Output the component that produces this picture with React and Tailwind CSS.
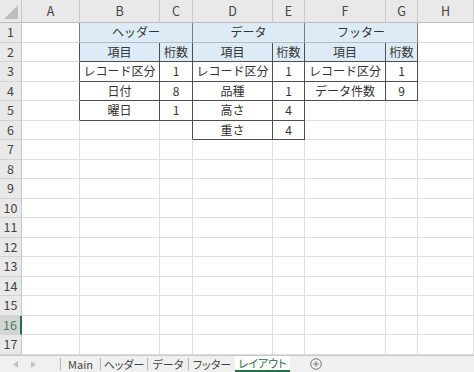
import React from "react";

const COLS = ["A", "B", "C", "D", "E", "F", "G", "H"];
const ROWS = Array.from({ length: 17 }, (_, i) => i + 1);

// cell data keyed by "row-col" (col is 1 = A)
const DATA = {
  "1-2": { text: "ヘッダー", span: 2, blue: true },
  "1-4": { text: "データ", span: 2, blue: true },
  "1-6": { text: "フッター", span: 2, blue: true },
  "2-2": { text: "項目", blue: true },
  "2-3": { text: "桁数", blue: true },
  "2-4": { text: "項目", blue: true },
  "2-5": { text: "桁数", blue: true },
  "2-6": { text: "項目", blue: true },
  "2-7": { text: "桁数", blue: true },
  "3-2": { text: "レコード区分" },
  "3-3": { text: "1" },
  "3-4": { text: "レコード区分" },
  "3-5": { text: "1" },
  "3-6": { text: "レコード区分" },
  "3-7": { text: "1" },
  "4-2": { text: "日付" },
  "4-3": { text: "8" },
  "4-4": { text: "品種" },
  "4-5": { text: "1" },
  "4-6": { text: "データ件数" },
  "4-7": { text: "9" },
  "5-2": { text: "曜日" },
  "5-3": { text: "1" },
  "5-4": { text: "高さ" },
  "5-5": { text: "4" },
  "6-4": { text: "重さ" },
  "6-5": { text: "4" },
};

const SKIP = ["1-3", "1-5", "1-7"];

const inTable = (r, c) => {
  if (c === 2 || c === 3) return r >= 1 && r <= 5;
  if (c === 4 || c === 5) return r >= 1 && r <= 6;
  if (c === 6 || c === 7) return r >= 1 && r <= 4;
  return false;
};

const TABS = [
  { label: "Main", w: "w-[40px]" },
  { label: "ヘッダー", w: "w-[47px]" },
  { label: "データ", w: "w-[41px]" },
  { label: "フッター", w: "w-[47px]" },
];

const Corner = () => (
  <div className="bg-[#e9e9e9] border-r border-b border-r-[#c6c6c6] border-b-[#bdbdbd] flex items-end justify-end p-[3px]">
    <svg width="14" height="14" viewBox="0 0 14 14">
      <polygon points="14,0 14,14 0,14" fill="#bfbfbf" />
    </svg>
  </div>
);

const Cell = ({ r, c }) => {
  const key = `${r}-${c}`;
  const d = DATA[key] || {};
  const last = c + (d.span || 1) - 1;
  const rightDark = inTable(r, last) || inTable(r, last + 1);
  const bottomDark = inTable(r, c) || inTable(r + 1, c);
  let bottom = bottomDark ? "border-b-[#4f4f4f]" : "border-b-[#dedede]";
  if (r === 1 && inTable(r, c)) bottom = "border-b-[#aebfd0]";
  const right = rightDark
    ? r === 1
      ? "border-r-[#7d7d7d]"
      : "border-r-[#4f4f4f]"
    : "border-r-[#dedede]";
  return (
    <div
      className={`${d.span === 2 ? "col-span-2" : ""} ${
        d.blue ? "bg-[#ddebf7]" : "bg-white"
      } border-r border-b ${right} ${bottom} flex items-center justify-center text-[12px] text-[#333] leading-none whitespace-nowrap overflow-hidden`}
    >
      {d.text}
    </div>
  );
};

export default function App() {
  return (
    <div className="w-[474px] h-[372px] bg-white overflow-hidden font-['Noto_Sans_CJK_JP','Noto_Sans',sans-serif] flex flex-col">
      <div className="h-[355px] grid grid-cols-[22px_58px_80px_33px_80px_32px_81px_32px_1fr] grid-rows-[23px_repeat(17,minmax(0,1fr))]">
        <Corner />
        {COLS.map((col) => (
          <div
            key={col}
            className="bg-[#e9e9e9] border-r border-b border-r-[#cacaca] border-b-[#bdbdbd] flex items-center justify-center text-[12.5px] text-[#444]"
          >
            {col}
          </div>
        ))}
        {ROWS.map((r) => (
          <React.Fragment key={r}>
            <div
              className={`border-b border-b-[#d2d2d2] flex items-center justify-center text-[12.5px] leading-none ${
                r === 16
                  ? "bg-[#d4d4d4] text-[#4a7a62] border-r-2 border-r-[#217346]"
                  : "bg-[#e9e9e9] text-[#444] border-r border-r-[#c6c6c6]"
              }`}
            >
              {r}
            </div>
            {COLS.map((_, i) => {
              const c = i + 1;
              if (SKIP.includes(`${r}-${c}`)) return null;
              return <Cell key={c} r={r} c={c} />;
            })}
          </React.Fragment>
        ))}
      </div>

      <div className="h-[17px] flex items-stretch bg-[#f0f0f0] border-t border-t-[#c8c8c8] text-[11px] text-[#444] [font-feature-settings:'palt']">
        <div className="w-[60px] flex items-center gap-[13px] pl-[13px]">
          <svg width="5" height="7" viewBox="0 0 5 7">
            <polygon points="5,0 5,7 0,3.5" fill="#c4c4c4" />
          </svg>
          <svg width="5" height="7" viewBox="0 0 5 7">
            <polygon points="0,0 0,7 5,3.5" fill="#c4c4c4" />
          </svg>
        </div>
        {TABS.map((t) => (
          <div key={t.label} className={`${t.w} flex items-center`}>
            <span className="w-px h-[12px] bg-[#b4b4b4]" />
            <span className="flex-1 text-center leading-none">{t.label}</span>
          </div>
        ))}
        <div className="w-[55px] bg-white flex items-center justify-center border-b-2 border-b-[#217346] text-[#2e6b4e] leading-none">
          レイアウト
        </div>
        <div className="w-[52px] flex items-center justify-center">
          <svg width="12" height="12" viewBox="0 0 12 12" fill="none" stroke="#7a7a7a" strokeWidth="1">
            <circle cx="6" cy="6" r="5.3" />
            <path d="M6 3.2v5.6M3.2 6h5.6" />
          </svg>
        </div>
        <div className="flex-1" />
      </div>
    </div>
  );
}
